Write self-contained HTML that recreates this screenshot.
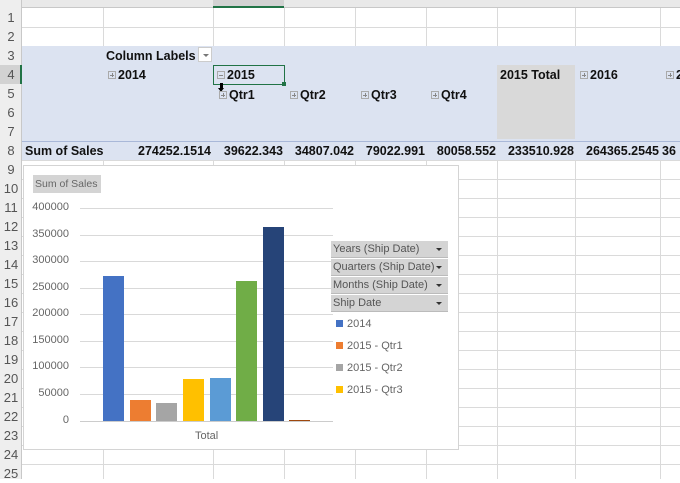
<!DOCTYPE html>
<html><head><style>
*{margin:0;padding:0;box-sizing:border-box}
body{width:680px;height:479px;overflow:hidden;background:#fff;font-family:"Liberation Sans",sans-serif;position:relative}
.a{position:absolute;white-space:nowrap}
.vl{position:absolute;top:0;width:1px;height:479px;background:#dadada}
.hl{position:absolute;left:0;height:1px;width:680px;background:#dadada}
.rh{position:absolute;left:0;width:22px;height:19px;font-size:13px;color:#555;text-align:center;line-height:19px}
.b{font-weight:bold;font-size:12.5px;color:#111}
.pl{display:inline-block;width:8px;height:8px;border:1px solid #aaa;margin-right:2px;vertical-align:0px;position:relative}
.pl:before{content:"";position:absolute;left:1px;top:3px;width:4px;height:1px;background:#888}
.pl.p:after{content:"";position:absolute;left:3px;top:1px;width:1px;height:4px;background:#888}
.yl{position:absolute;left:20px;font-size:11px;color:#666;width:49px;text-align:right}
.gl{position:absolute;left:80px;width:253px;height:1px;background:#d9d9d9}
.bar{position:absolute;bottom:0;width:21px}
.btn{position:absolute;left:331px;width:117px;height:17px;background:#d4d4d4;border-bottom:1px solid #bbb;font-size:11px;color:#555;line-height:17px;padding-left:2px}
.btn:after{content:"";position:absolute;right:6px;top:7px;border:3px solid transparent;border-top:3px solid #333}
.lg{position:absolute;left:336px;font-size:11px;color:#666}
.lg i{display:inline-block;width:7px;height:7px;margin-right:4px}
</style></head><body>
<!-- grid lines -->
<div class="vl" style="left:103px"></div><div class="vl" style="left:213px"></div><div class="vl" style="left:284px"></div><div class="vl" style="left:355px"></div><div class="vl" style="left:426px"></div><div class="vl" style="left:497px"></div><div class="vl" style="left:575px"></div><div class="vl" style="left:660px"></div>
<div class="hl" style="top:27px"></div><div class="hl" style="top:46px"></div><div class="hl" style="top:160px"></div><div class="hl" style="top:179px"></div><div class="hl" style="top:198px"></div><div class="hl" style="top:217px"></div><div class="hl" style="top:236px"></div><div class="hl" style="top:255px"></div><div class="hl" style="top:274px"></div><div class="hl" style="top:293px"></div><div class="hl" style="top:312px"></div><div class="hl" style="top:331px"></div><div class="hl" style="top:350px"></div><div class="hl" style="top:369px"></div><div class="hl" style="top:388px"></div><div class="hl" style="top:407px"></div><div class="hl" style="top:426px"></div><div class="hl" style="top:445px"></div><div class="hl" style="top:464px"></div>
<!-- pivot bg -->
<div class="a" style="left:22px;top:46px;width:658px;height:114px;background:#dce3f1"></div>
<div class="a" style="left:497px;top:65px;width:78px;height:74px;background:#d9d9d9"></div>
<div class="a" style="left:22px;top:141px;width:658px;height:1px;background:#a9b8d8"></div>
<!-- headers -->
<div class="a" style="left:0;top:0;width:680px;height:8px;background:#e9e9e9;border-bottom:1px solid #c8c8c8"></div>
<div class="a" style="left:213px;top:0;width:71px;height:8px;background:#d2d2d2;border-bottom:2px solid #217346"></div>
<div class="a" style="left:0;top:0;width:22px;height:479px;background:#eeeeee;border-right:1px solid #c8c8c8"></div>
<div class="a" style="left:0;top:65px;width:22px;height:19px;background:#d2d2d2;border-right:2px solid #217346"></div>
<div class="rh" style="top:8px">1</div><div class="rh" style="top:27px">2</div><div class="rh" style="top:46px">3</div><div class="rh" style="top:65px">4</div><div class="rh" style="top:84px">5</div><div class="rh" style="top:103px">6</div><div class="rh" style="top:122px">7</div><div class="rh" style="top:141px">8</div><div class="rh" style="top:160px">9</div><div class="rh" style="top:179px">10</div><div class="rh" style="top:198px">11</div><div class="rh" style="top:217px">12</div><div class="rh" style="top:236px">13</div><div class="rh" style="top:255px">14</div><div class="rh" style="top:274px">15</div><div class="rh" style="top:293px">16</div><div class="rh" style="top:312px">17</div><div class="rh" style="top:331px">18</div><div class="rh" style="top:350px">19</div><div class="rh" style="top:369px">20</div><div class="rh" style="top:388px">21</div><div class="rh" style="top:407px">22</div><div class="rh" style="top:426px">23</div><div class="rh" style="top:445px">24</div><div class="rh" style="top:464px">25</div>
<!-- pivot text -->
<div class="a b" style="left:106px;top:49px">Column Labels</div>
<div class="a" style="left:198px;top:47px;width:14px;height:15px;background:#fff;border:1px solid #ccc"><div class="a" style="left:4px;top:6px;border:3px solid transparent;border-top:3px solid #777"></div></div>
<div class="a b" style="left:108px;top:68px"><span class="pl p"></span>2014</div>
<div class="a" style="left:213px;top:65px;width:72px;height:20px;border:1.5px solid #217346"></div>
<div class="a" style="left:282px;top:82px;width:4px;height:4px;background:#217346"></div>
<div class="a b" style="left:217px;top:68px"><span class="pl"></span>2015</div>
<div class="a" style="left:220px;top:83px;width:3px;height:6px;background:#000"></div>
<div class="a" style="left:218px;top:88px;border:3.5px solid transparent;border-top:4px solid #000"></div>
<div class="a b" style="left:219px;top:88px"><span class="pl p"></span>Qtr1</div>
<div class="a b" style="left:290px;top:88px"><span class="pl p"></span>Qtr2</div>
<div class="a b" style="left:361px;top:88px"><span class="pl p"></span>Qtr3</div>
<div class="a b" style="left:431px;top:88px"><span class="pl p"></span>Qtr4</div>
<div class="a b" style="left:500px;top:68px">2015 Total</div>
<div class="a b" style="left:580px;top:68px"><span class="pl p"></span>2016</div>
<div class="a b" style="left:666px;top:68px"><span class="pl p"></span>2</div>
<div class="a b" style="left:25px;top:144px">Sum of Sales</div>
<div class="a b" style="left:103px;top:144px;width:108px;text-align:right">274252.1514</div>
<div class="a b" style="left:213px;top:144px;width:70px;text-align:right">39622.343</div>
<div class="a b" style="left:284px;top:144px;width:70px;text-align:right">34807.042</div>
<div class="a b" style="left:355px;top:144px;width:70px;text-align:right">79022.991</div>
<div class="a b" style="left:426px;top:144px;width:70px;text-align:right">80058.552</div>
<div class="a b" style="left:497px;top:144px;width:77px;text-align:right">233510.928</div>
<div class="a b" style="left:575px;top:144px;width:84px;text-align:right">264365.2545</div>
<div class="a b" style="left:662px;top:144px">36</div>
<!-- chart -->
<div class="a" style="left:23px;top:165px;width:436px;height:285px;background:#fff;border:1px solid #d4d4d4">
<div class="a" style="left:9px;top:9px;width:68px;height:18px;background:#d4d4d4;font-size:10.5px;color:#666;line-height:18px;padding-left:2px">Sum of Sales</div>
</div>
<div class="yl" style="top:201px">400000</div><div class="yl" style="top:228px">350000</div><div class="yl" style="top:254px">300000</div><div class="yl" style="top:281px">250000</div><div class="yl" style="top:307px">200000</div><div class="yl" style="top:334px">150000</div><div class="yl" style="top:360px">100000</div><div class="yl" style="top:387px">50000</div><div class="yl" style="top:414px">0</div>
<div class="gl" style="top:208px"></div><div class="gl" style="top:235px"></div><div class="gl" style="top:261px"></div><div class="gl" style="top:288px"></div><div class="gl" style="top:314px"></div><div class="gl" style="top:341px"></div><div class="gl" style="top:367px"></div><div class="gl" style="top:394px"></div><div class="gl" style="top:421px;background:#ccc"></div>
<div class="a" style="left:0;top:0;width:680px;height:421px">
<div class="bar" style="left:103px;height:145px;background:#4472c4"></div>
<div class="bar" style="left:130px;height:21px;background:#ed7d31"></div>
<div class="bar" style="left:156px;height:18px;background:#a5a5a5"></div>
<div class="bar" style="left:183px;height:42px;background:#ffc000"></div>
<div class="bar" style="left:210px;height:43px;background:#5b9bd5"></div>
<div class="bar" style="left:236px;height:140px;background:#70ad47"></div>
<div class="bar" style="left:263px;height:194px;background:#264478"></div>
<div class="bar" style="left:289px;height:1px;background:#9e480e"></div>
</div>
<div class="a" style="left:195px;top:430px;font-size:11px;color:#666">Total</div>
<div class="btn" style="top:241px">Years (Ship Date)</div>
<div class="btn" style="top:259px">Quarters (Ship Date)</div>
<div class="btn" style="top:277px">Months (Ship Date)</div>
<div class="btn" style="top:295px">Ship Date</div>
<div class="lg" style="top:318px"><i style="background:#4472c4"></i>2014</div>
<div class="lg" style="top:340px"><i style="background:#ed7d31"></i>2015 - Qtr1</div>
<div class="lg" style="top:362px"><i style="background:#a5a5a5"></i>2015 - Qtr2</div>
<div class="lg" style="top:384px"><i style="background:#ffc000"></i>2015 - Qtr3</div>
</body></html>
